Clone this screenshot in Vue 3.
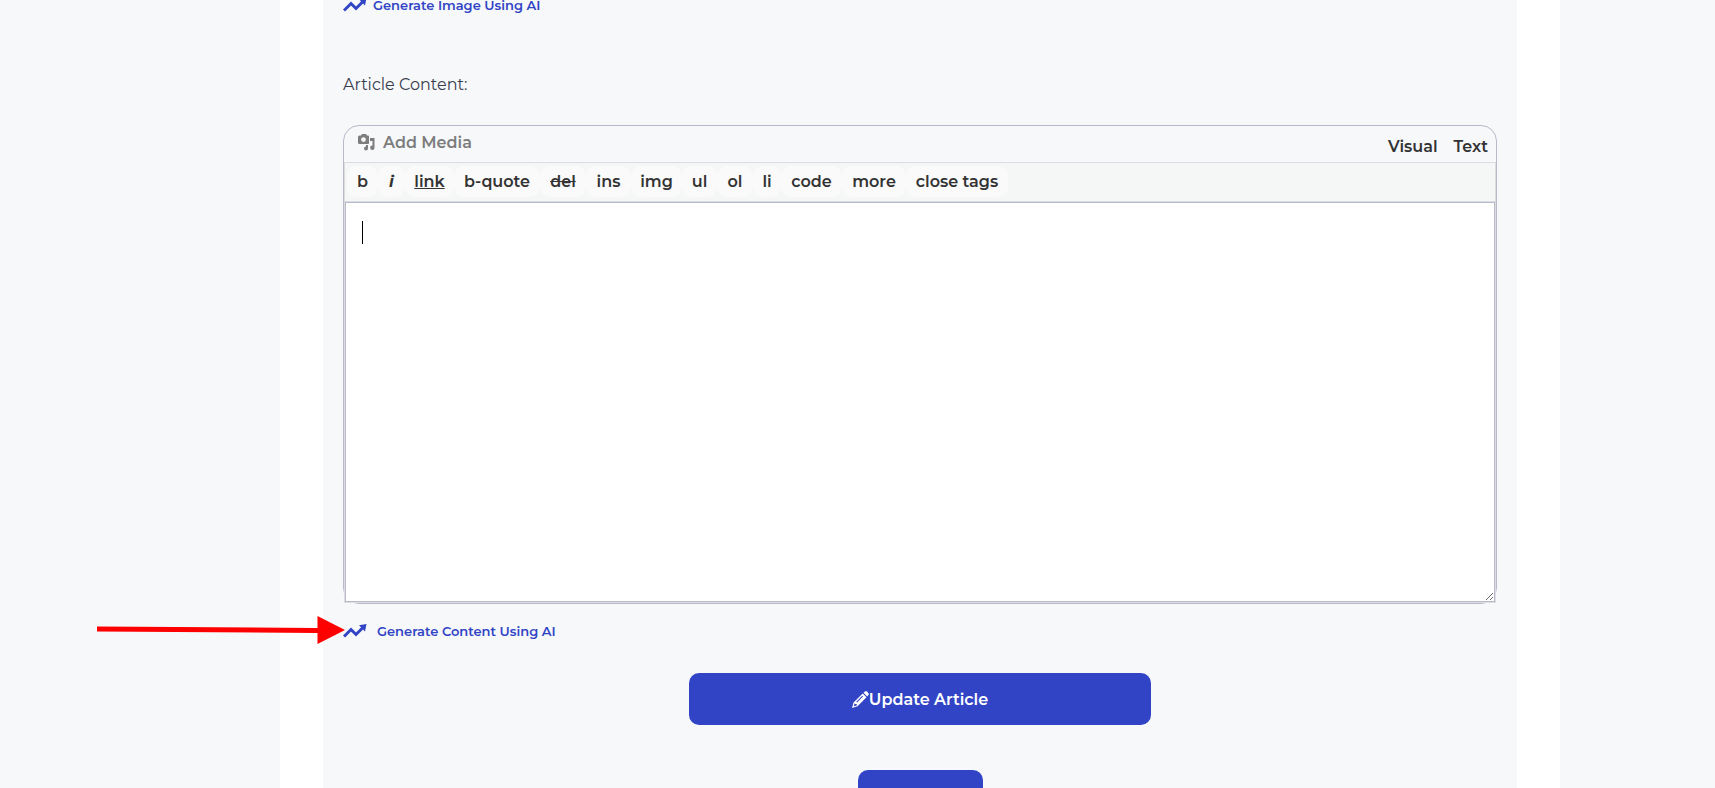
<script setup>
import { ref } from 'vue'

const content = ref('')
const tags = [
  { label: 'b' },
  { label: 'i', style: 'italic' },
  { label: 'link', style: 'underline' },
  { label: 'b-quote' },
  { label: 'del', style: 'strike' },
  { label: 'ins' },
  { label: 'img' },
  { label: 'ul' },
  { label: 'ol' },
  { label: 'li' },
  { label: 'code' },
  { label: 'more' },
  { label: 'close tags' }
]
</script>

<template>
  <div class="page">
    <main class="container">
      <form class="panel" @submit.prevent>
        <a class="ai-link" href="#image">
          <svg class="trend" viewBox="0 0 24 14" aria-hidden="true">
            <path d="M1 12.5 8 5.5 13 10.5 20 3.5" fill="none" stroke="currentColor" stroke-width="3" />
            <path d="M16 1.2 23.5 0 22 7.5Z" fill="currentColor" />
          </svg>
          <span>Generate Image Using AI</span>
        </a>

        <label class="field-label" for="article-content">Article Content:</label>

        <div class="editor">
          <div class="editor-head">
            <button type="button" class="media">
              <svg viewBox="0 0 17 17" aria-hidden="true">
                <path
                  fill="currentColor"
                  fill-rule="evenodd"
                  d="M1.5 1.5H3L4 0h4l1 1.5h1.2q.8 0 .8.8v6.900q0 .8-.8.8H1.500Q0 10 0 8.500V3Q0 1.500 1.500 1.500ZM5.500 3.200a2.400 2.400 0 1 0 0 4.800 2.400 2.400 0 0 0 0-4.800Z"
                />
                <path
                  fill="currentColor"
                  d="M12 4h4.500v9.700a2.200 2.200 0 1 1-2-2.200V7H12ZM8 11h2v3.300A2 2 0 1 1 8 12.500Z"
                />
              </svg>
              <span>Add Media</span>
            </button>
            <div class="modes">
              <button type="button">Visual</button>
              <button type="button">Text</button>
            </div>
          </div>
          <div class="editor-body">
            <div class="toolbar">
              <button v-for="tag in tags" :key="tag.label" type="button" :class="tag.style">
                {{ tag.label }}
              </button>
            </div>
            <div class="text-area">
              <textarea id="article-content" v-model="content"></textarea>
              <span class="caret"></span>
            </div>
          </div>
        </div>

        <div class="content-ai">
          <a class="ai-link wide" href="#content">
            <svg class="trend" viewBox="0 0 24 14" aria-hidden="true">
              <path d="M1 12.5 8 5.5 13 10.5 20 3.5" fill="none" stroke="currentColor" stroke-width="3" />
              <path d="M16 1.2 23.5 0 22 7.5Z" fill="currentColor" />
            </svg>
            <span>Generate Content Using AI</span>
          </a>
          <svg class="arrow" viewBox="0 0 248 28" aria-hidden="true">
            <path d="M0 10.500 220.500 12V0L248 14 220.500 28V17L0 15.500Z" fill="#f00" />
          </svg>
        </div>

        <button type="submit" class="primary">
          <svg viewBox="0 0 17 17" aria-hidden="true">
            <path
              fill="currentColor"
              fill-rule="evenodd"
              d="M11.500 1.700 13 .500q1-.8 2 .1L16.300 2q1 1 .1 2L15.200 5.400ZM10.700 2.500 14.500 6.200 5.500 15.300 0 17 1.500 11.500ZM2.600 12.300 1.800 15.200 4.700 14.400V12.900H3.100ZM10.300 4.700 4.300 10.700 5 11.400 11 5.400Z"
            />
          </svg>
          <span>Update Article</span>
        </button>
        <button type="button" class="primary secondary" aria-label="Back"></button>
      </form>
    </main>
  </div>
</template>

<style>
body {
  margin: 0;
}
</style>

<style scoped>
.page {
  box-sizing: border-box;
  height: 100vh;
  overflow: hidden;
  padding: 0 155px 0 280px;
  background: #f7f8fa;
  font-family: Montserrat, Inter, sans-serif;
  color: #333;
}

.container {
  padding: 0 43px;
  background: #fff;
}

.panel {
  display: flex;
  flex-direction: column;
  align-items: flex-start;
  padding: 0 20px 20px;
  background: #f6f8fa;
}

button {
  margin: 0;
  padding: 0;
  border: 0;
  background: none;
  color: inherit;
  font: inherit;
  font-weight: 600;
  cursor: pointer;
}

.ai-link {
  display: flex;
  align-items: center;
  gap: 6px;
  height: 20px;
  color: #3144c5;
  font-size: 13px;
  font-weight: 600;
  line-height: 20px;
  text-decoration: none;
}

.panel > .ai-link {
  margin-top: -5px;
}

.ai-link.wide {
  gap: 10px;
}

.trend {
  width: 24px;
  height: 14px;
}

.field-label {
  margin-top: 58px;
  color: #363b4d;
  font-size: 16px;
  font-weight: 400;
  line-height: 24px;
}

.editor {
  box-sizing: border-box;
  width: 100%;
  margin-top: 28px;
  border: 1px solid #b8b9ca;
  border-radius: 16px;
}

.editor-head {
  display: flex;
  align-items: center;
  justify-content: space-between;
  height: 36px;
  padding: 0 8px 0 14px;
  font-size: 16px;
}

.media {
  display: flex;
  align-items: center;
  gap: 8px;
  height: 32px;
  align-self: flex-start;
  color: #7d7d7d;
}

.media svg {
  width: 17px;
  height: 17px;
}

.modes {
  display: flex;
  gap: 16px;
  padding-top: 4px;
}

.editor-body {
  border: 1px solid #dcdde0;
}

.toolbar {
  display: grid;
  grid-template-columns: 31px 27px 49px 86px 46px 45px 51px 35px 36px 28px 61px 64px 102px;
  padding: 3px 2px 4px;
  border-bottom: 1px solid #dcdde0;
  background: #f5f7f6;
  font-size: 16px;
}

.toolbar button {
  height: 31px;
  border-radius: 10px;
  background: #fafafa;
  white-space: nowrap;
}

.toolbar .italic {
  font-style: italic;
  font-weight: 700;
}

.toolbar .underline {
  text-decoration: underline;
}

.toolbar .strike {
  text-decoration: line-through;
}

.text-area {
  position: relative;
}

textarea {
  display: block;
  box-sizing: border-box;
  width: 100%;
  height: 400px;
  padding: 16px;
  border: 1px solid #b8b9ca;
  border-radius: 0;
  outline: none;
  background: #fff;
  font: inherit;
  font-size: 16px;
  resize: vertical;
}

.caret {
  position: absolute;
  top: 19px;
  left: 17px;
  width: 1px;
  height: 23px;
  background: #000;
}

.content-ai {
  position: relative;
  margin-top: 17px;
}

.arrow {
  position: absolute;
  top: -5px;
  right: 100%;
  width: 248px;
  height: 28px;
  margin-right: -2px;
}

.primary {
  display: flex;
  align-items: center;
  justify-content: center;
  align-self: center;
  width: 40%;
  height: 52px;
  margin-top: 32px;
  border-radius: 10px;
  background: #3144c5;
  color: #fff;
  font-size: 16px;
}

.primary svg {
  width: 17px;
  height: 17px;
}

.secondary {
  width: 125px;
  margin-top: 45px;
}
</style>
